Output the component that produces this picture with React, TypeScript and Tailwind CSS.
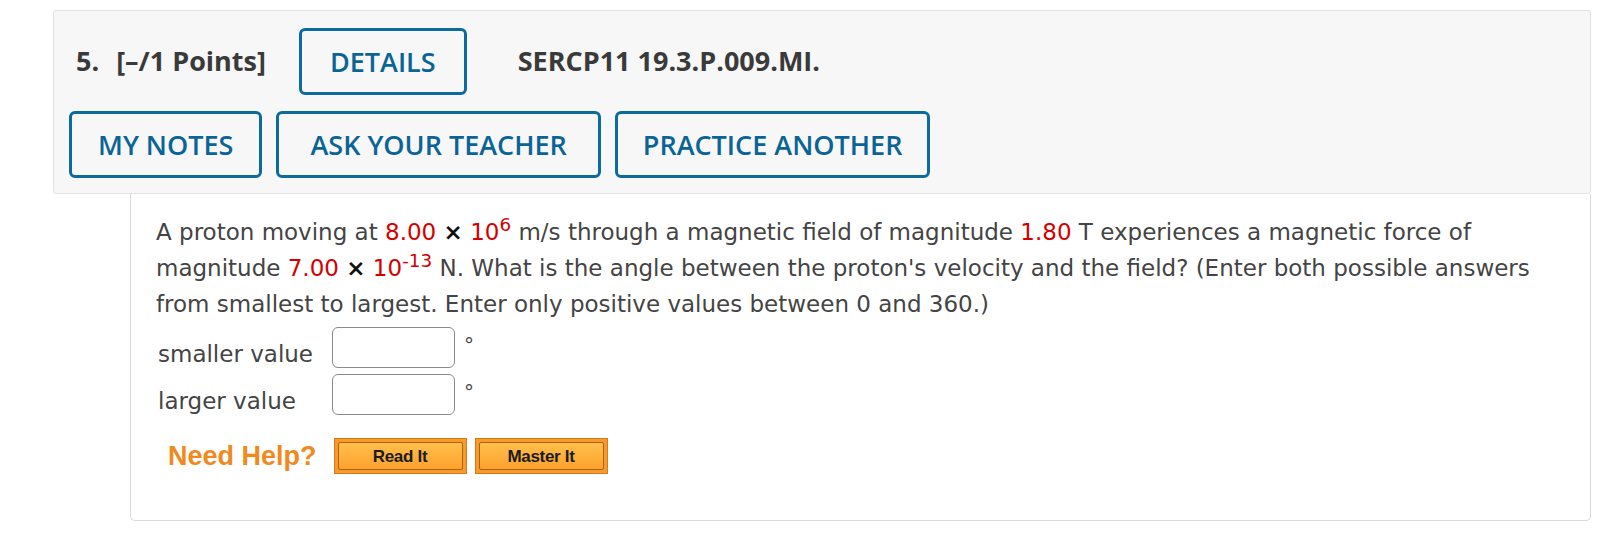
import React from "react";

const BLUE_BTN =
  "border-[3px] border-[#0d6a9c] rounded-[6px] py-[12px] leading-[37px] text-[27px] font-semibold text-[#0b6496] bg-[#f7f7f7]";

function Red({ children }: { children: React.ReactNode }) {
  return <span className="text-[#d40000]">{children}</span>;
}

function Times() {
  return <span className="font-bold text-[#111]">×</span>;
}

function OrangeButton({ label }: { label: string }) {
  return (
    <div className="h-[36px] w-[133px] bg-[#f79a2a] border border-[#d67a1c] p-[3px]">
      <div className="h-full w-full rounded-[2px] border border-[#a8641c] bg-gradient-to-b from-[#ffbf4a] to-[#fca22c] flex items-center justify-center">
        <span className="font-['Liberation_Sans',Arial,sans-serif] font-bold text-[17px] text-[#1c1c1c] tracking-[-0.3px]">
          {label}
        </span>
      </div>
    </div>
  );
}

function AnswerRow({ label }: { label: string }) {
  return (
    <div className="flex items-center h-[41px]">
      <div className="w-[176px] pl-[2px] pt-[14px]">{label}</div>
      <div className="w-[123px] h-[41px] border border-[#8a8a8a] rounded-[6px] bg-white" />
      <div className="self-start ml-[9px] text-[20px] leading-[36px]">°</div>
    </div>
  );
}

export default function App() {
  return (
    <div className="w-[1620px] h-[538px] bg-white overflow-hidden">
      <div className="pl-[53px] pt-[10px] w-[1591px]">
        {/* question header */}
        <div className="h-[184px] border border-[#e2e2e2] rounded-[3px] bg-[#f7f7f7] pl-[15px] pt-[17px] font-['Open_Sans',sans-serif]">
          <div className="flex items-center h-[67px] text-[27px] font-bold text-[#3a3a3a]">
            <span className="ml-[7px]">5.</span>
            <span className="ml-[17px]">[–/1 Points]</span>
            <button className={`${BLUE_BTN} px-[28px] ml-[33px]`}>DETAILS</button>
            <span className="ml-[51px]">SERCP11 19.3.P.009.MI.</span>
          </div>
          <div className="flex gap-[14px] mt-[16px]">
            <button className={`${BLUE_BTN} px-[26px]`}>MY NOTES</button>
            <button className={`${BLUE_BTN} px-[31px]`}>ASK YOUR TEACHER</button>
            <button className={`${BLUE_BTN} px-[25px]`}>PRACTICE ANOTHER</button>
          </div>
        </div>
      </div>

      {/* question body */}
      <div className="ml-[130px] w-[1461px] h-[327px] border-x border-b border-[#dadada] rounded-b-[5px] pl-[25px] pt-[20px] font-['DejaVu_Sans',Verdana,sans-serif] text-[23px] text-[#444]">
        <p className="w-[1390px] leading-[36px]">
          A proton moving at <Red>8.00</Red> <Times />{" "}
          <Red>
            10<sup className="text-[80%]">6</sup>
          </Red>{" "}
          m/s through a magnetic field of magnitude <Red>1.80</Red> T experiences a magnetic force of
          magnitude <Red>7.00</Red> <Times />{" "}
          <Red>
            10<sup className="text-[80%]">-13</sup>
          </Red>{" "}
          N. What is the angle between the proton's velocity and the field? (Enter both possible answers
          from smallest to largest. Enter only positive values between 0 and 360.)
        </p>
        <div className="flex flex-col gap-[6px] mt-[5px]">
          <AnswerRow label="smaller value" />
          <AnswerRow label="larger value" />
        </div>
        <div className="flex items-center mt-[21px] pl-[12px]">
          <span className="font-['Liberation_Sans',Arial,sans-serif] font-bold text-[27px] text-[#f0891e] mr-[17px]">
            Need Help?
          </span>
          <OrangeButton label="Read It" />
          <div className="w-[8px]" />
          <OrangeButton label="Master It" />
        </div>
      </div>
    </div>
  );
}
